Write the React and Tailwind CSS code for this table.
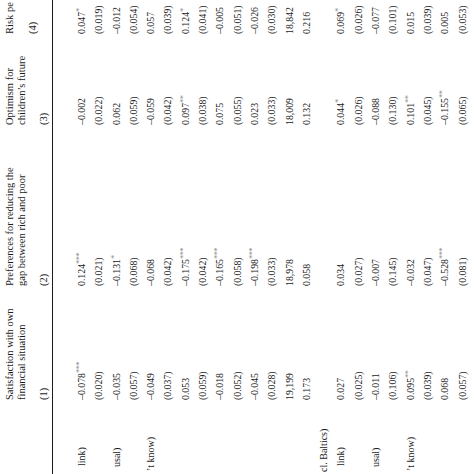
import React from 'react';

const cols = 'grid grid-cols-[74px_114px_161px_91px_34px]';

const rows = [
  { label: 'link)', pad: 'pl-[8px]', v: ['–0.078***', '0.124***', '–0.002', '0.047*'] },
  { v: ['(0.020)', '(0.021)', '(0.022)', '(0.019)'] },
  { label: 'usal)', pad: 'pl-[7px]', v: ['–0.035', '–0.131*', '0.062', '–0.012'] },
  { v: ['(0.057)', '(0.068)', '(0.059)', '(0.054)'] },
  { label: '’t know)', pad: 'pl-[3px]', v: ['–0.049', '–0.068', '–0.059', '0.057'] },
  { v: ['(0.037)', '(0.042)', '(0.042)', '(0.039)'] },
  { v: ['0.053', '–0.175***', '0.097**', '0.124*'] },
  { v: ['(0.059)', '(0.042)', '(0.038)', '(0.041)'] },
  { v: ['–0.018', '–0.165***', '0.075', '–0.005'] },
  { v: ['(0.052)', '(0.058)', '(0.055)', '(0.051)'] },
  { v: ['–0.045', '–0.198***', '0.023', '–0.026'] },
  { v: ['(0.028)', '(0.033)', '(0.033)', '(0.030)'] },
  { v: ['19,199', '18,978', '18,009', '18,842'] },
  { v: ['0.173', '0.058', '0.132', '0.216'] },
  { label: 'cl. Baltics)', pad: 'pl-[2px]', v: ['', '', '', ''] },
  { label: 'link)', pad: 'pl-[8px]', v: ['0.027', '0.034', '0.044*', '0.069*'] },
  { v: ['(0.025)', '(0.027)', '(0.026)', '(0.026)'] },
  { label: 'usal)', pad: 'pl-[7px]', v: ['–0.011', '–0.007', '–0.088', '–0.077'] },
  { v: ['(0.106)', '(0.145)', '(0.130)', '(0.101)'] },
  { label: '’t know)', pad: 'pl-[3px]', v: ['0.095**', '–0.032', '0.101**', '0.015'] },
  { v: ['(0.039)', '(0.047)', '(0.045)', '(0.039)'] },
  { v: ['0.068', '–0.528***', '–0.155**', '0.005'] },
  { v: ['(0.057)', '(0.081)', '(0.065)', '(0.053)'] },
];

function Value({ text }) {
  const m = text.match(/^(.*?)(\**)$/);
  return (
    <span className="whitespace-nowrap">
      {m[1]}
      {m[2] && <sup className="text-[8.5px] text-[#888] top-[-3px] tracking-[-0.5px]">{m[2]}</sup>}
    </span>
  );
}

function Head({ lines, num }) {
  return (
    <div className="pt-[4px] whitespace-nowrap">
      {lines.map((l) => (
        <div key={l} className="leading-[11.5px]">{l}</div>
      ))}
      <div className="leading-[11.5px] mt-[11px]">{num}</div>
    </div>
  );
}

export default function App() {
  return (
    <div className="w-[474px] h-[474px] overflow-hidden bg-white">
      <div
        className="w-[474px] h-[474px] -rotate-90 text-[#1a1a1a]"
        style={{ fontFamily: '"Liberation Serif", "Times New Roman", serif' }}
      >
        {/* header */}
        <div className={`${cols} h-[53px] border-b-[1.5px] border-[#1a1a1a] text-[10.5px]`}>
          <div />
          <Head lines={['Satisfaction with own', 'financial situation']} num="(1)" />
          <Head lines={['Preferences for reducing the', 'gap between rich and poor']} num="(2)" />
          <Head lines={['Optimism for', 'children’s future']} num="(3)" />
          <Head lines={['Risk pe']} num="(4)" />
        </div>

        {/* body */}
        <div className="pt-[20px]">
          {rows.map((r, i) => (
            <div key={i} className={`${cols} h-[17.3px] leading-[17.3px] text-[9.8px]`}>
              <div className={`text-[10px] whitespace-nowrap ${r.pad || ''}`}>{r.label}</div>
              {r.v.map((v, j) => (
                <div key={j}>
                  <Value text={v} />
                </div>
              ))}
            </div>
          ))}
        </div>
      </div>
    </div>
  );
}
